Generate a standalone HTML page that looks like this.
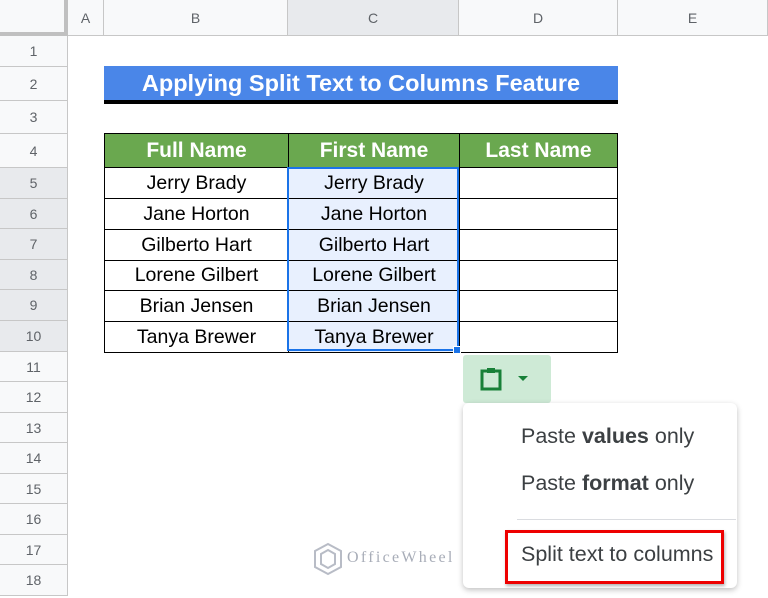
<!DOCTYPE html>
<html><head><style>
*{margin:0;padding:0;box-sizing:border-box}
body{width:768px;height:598px;overflow:hidden;background:#fff;font-family:"Liberation Sans",Arial,sans-serif;position:relative}
.a{position:absolute}
.ch{position:absolute;top:0;height:36px;background:#f8f9fa;border-right:1px solid #c7c7c7;border-bottom:1px solid #c7c7c7;color:#5f6368;font-size:14px;text-align:center;line-height:36px}
.rh{position:absolute;left:0;width:68px;background:#f8f9fa;border-bottom:1px solid #c7c7c7;border-right:1px solid #c7c7c7;color:#5f6368;font-size:14px;text-align:center}
.c{position:absolute;text-align:center;font-size:19.5px;color:#000;border:1px solid #000;white-space:nowrap}
.mi{position:absolute;left:521px;font-size:21.5px;color:#3c4043;white-space:nowrap}
</style></head><body>
<div class="ch" style="left:0;width:68px;border-right:4px solid #c0c0c0;border-bottom:4px solid #c0c0c0"></div>
<div class="ch" style="left:68px;width:36px">A</div>
<div class="ch" style="left:104px;width:184px">B</div>
<div class="ch" style="left:288px;width:171px;background:#e8eaed">C</div>
<div class="ch" style="left:459px;width:159px">D</div>
<div class="ch" style="left:618px;width:150px">E</div>
<div id="rows"></div>
<script>
var t=[36,67,101,134,168,199,229,260,290,321,352,382,413,443,474,504,535,565,596],h='';
for(var i=0;i<18;i++){var hh=t[i+1]-t[i];h+='<div class="rh" style="top:'+t[i]+'px;height:'+hh+'px;line-height:'+hh+'px;'+(i>=4&&i<=9?'background:#e8eaed':'')+'">'+(i+1)+'</div>';}
document.getElementById('rows').innerHTML=h;
</script>
<div class="a" style="left:104px;top:66px;width:514px;height:38px;background:#4a86e8;border-bottom:4px solid #000;color:#fff;font-weight:bold;font-size:23.5px;text-align:center;line-height:34px;white-space:nowrap">Applying Split Text to Columns Feature</div>
<div class="a" style="left:104px;top:133px;width:514px;height:35px;background:#6aa84f;border:1px solid #000"></div>
<div class="c" style="left:104px;top:133px;width:185px;height:35px;line-height:33px;color:#fff;font-weight:bold;font-size:21px">Full Name</div>
<div class="c" style="left:288px;top:133px;width:172px;height:35px;line-height:33px;color:#fff;font-weight:bold;font-size:21px">First Name</div>
<div class="c" style="left:459px;top:133px;width:159px;height:35px;line-height:33px;color:#fff;font-weight:bold;font-size:21px">Last Name</div>
<div id="tb"></div>
<script>
var n=["Jerry Brady","Jane Horton","Gilberto Hart","Lorene Gilbert","Brian Jensen","Tanya Brewer"],r=[167,198,229,260,290,321,352],s='';
for(var i=0;i<6;i++){var hh=r[i+1]-r[i]+1;
s+='<div class="c" style="left:104px;top:'+r[i]+'px;width:185px;height:'+hh+'px;line-height:'+(hh-2)+'px">'+n[i]+'</div>';
s+='<div class="c" style="left:288px;top:'+r[i]+'px;width:172px;height:'+hh+'px;line-height:'+(hh-2)+'px;background:#e8f0fe">'+n[i]+'</div>';
s+='<div class="c" style="left:459px;top:'+r[i]+'px;width:159px;height:'+hh+'px"></div>';}
document.getElementById('tb').innerHTML=s;
</script>
<div class="a" style="left:287px;top:167px;width:172px;height:184px;border:2px solid #1a73e8"></div>
<div class="a" style="left:453px;top:346px;width:8px;height:8px;background:#1a73e8;border:1px solid #fff"></div>
<div class="a" style="left:463px;top:355px;width:88px;height:48px;background:#ceead6;border-radius:3px"></div>
<svg class="a" style="left:478px;top:366px" width="60" height="26" viewBox="0 0 60 26">
<rect x="4" y="5" width="18" height="18" fill="none" stroke="#188038" stroke-width="3"/>
<rect x="9" y="2" width="8" height="5" fill="#188038"/>
<path d="M40 10 L50 10 L45 15 Z" fill="#188038"/>
</svg>
<div class="a" style="left:463px;top:403px;width:274px;height:185px;background:#fff;border-radius:6px;box-shadow:0 2px 6px rgba(0,0,0,.25)"></div>
<div class="mi" style="top:424px">Paste <b>values</b> only</div>
<div class="mi" style="top:471px">Paste <b>format</b> only</div>
<div class="a" style="left:517px;top:519px;width:219px;height:1px;background:#dadce0"></div>
<div class="a" style="left:505px;top:530px;width:219px;height:54px;border:3px solid #e00;box-shadow:1px 2px 3px rgba(0,0,0,.3)"></div>
<div class="mi" style="top:542px">Split text to columns</div>
<svg class="a" style="left:313px;top:542px" width="30" height="34" viewBox="0 0 30 34"><path d="M15 2 L28 9 L28 25 L15 32 L2 25 L2 9 Z M15 8 L22 12 L22 22 L15 26 L8 22 L8 12 Z" fill="none" stroke="#b8bcc6" stroke-width="2"/></svg>
<div class="a" style="left:347px;top:549px;font-family:'Liberation Serif',serif;font-size:16px;letter-spacing:2.3px;color:#a8adb8">OfficeWheel</div>
</body></html>
